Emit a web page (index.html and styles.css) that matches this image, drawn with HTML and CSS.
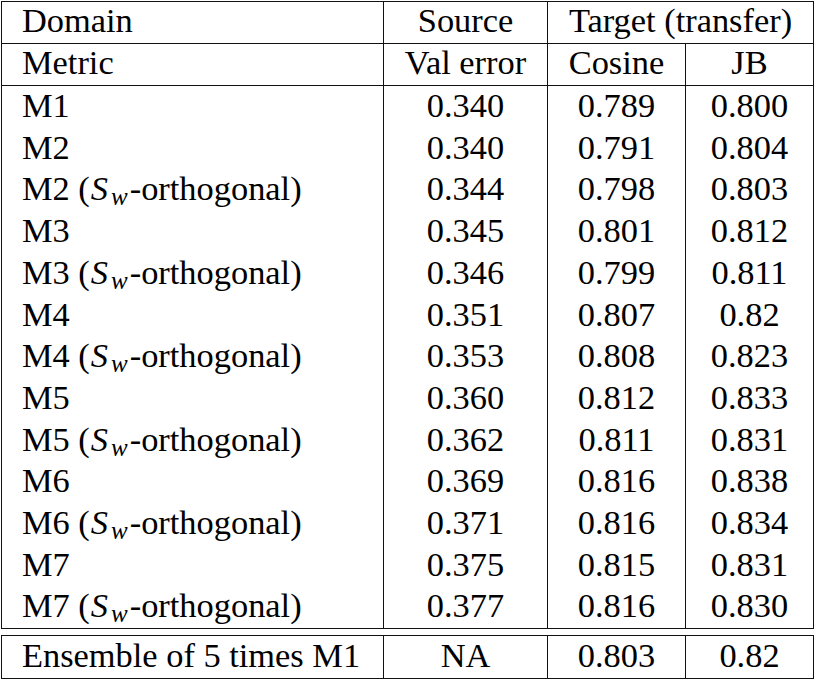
FILE: index.html
```html
<!DOCTYPE html>
<html>
<head>
<meta charset="utf-8">
<link rel="stylesheet" href="styles.css">
</head>
<body>
<div class="page">
  <table class="tbl main">
    <colgroup><col class="c1"><col class="c2"><col class="c3"><col class="c4"></colgroup>
    <thead>
      <tr class="hrow"><td class="l">Domain</td><td>Source</td><td colspan="2">Target (transfer)</td></tr>
      <tr class="hrow"><td class="l">Metric</td><td>Val error</td><td>Cosine</td><td>JB</td></tr>
    </thead>
    <tbody>
      <tr><td class="l">M1</td><td>0.340</td><td>0.789</td><td>0.800</td></tr>
      <tr><td class="l">M2</td><td>0.340</td><td>0.791</td><td>0.804</td></tr>
      <tr><td class="l">M2 (<i>S</i><sub>w</sub>-orthogonal)</td><td>0.344</td><td>0.798</td><td>0.803</td></tr>
      <tr><td class="l">M3</td><td>0.345</td><td>0.801</td><td>0.812</td></tr>
      <tr><td class="l">M3 (<i>S</i><sub>w</sub>-orthogonal)</td><td>0.346</td><td>0.799</td><td>0.811</td></tr>
      <tr><td class="l">M4</td><td>0.351</td><td>0.807</td><td>0.82</td></tr>
      <tr><td class="l">M4 (<i>S</i><sub>w</sub>-orthogonal)</td><td>0.353</td><td>0.808</td><td>0.823</td></tr>
      <tr><td class="l">M5</td><td>0.360</td><td>0.812</td><td>0.833</td></tr>
      <tr><td class="l">M5 (<i>S</i><sub>w</sub>-orthogonal)</td><td>0.362</td><td>0.811</td><td>0.831</td></tr>
      <tr><td class="l">M6</td><td>0.369</td><td>0.816</td><td>0.838</td></tr>
      <tr><td class="l">M6 (<i>S</i><sub>w</sub>-orthogonal)</td><td>0.371</td><td>0.816</td><td>0.834</td></tr>
      <tr><td class="l">M7</td><td>0.375</td><td>0.815</td><td>0.831</td></tr>
      <tr><td class="l">M7 (<i>S</i><sub>w</sub>-orthogonal)</td><td>0.377</td><td>0.816</td><td>0.830</td></tr>
    </tbody>
  </table>
  <table class="tbl foot">
    <colgroup><col class="c1"><col class="c2"><col class="c3"><col class="c4"></colgroup>
    <tbody>
      <tr class="frow"><td class="l">Ensemble of 5 times M1</td><td>NA</td><td>0.803</td><td>0.82</td></tr>
    </tbody>
  </table>
</div>
</body>
</html>
```

FILE: styles.css
```css
html, body {
  margin: 0;
  background: #ffffff;
  font-family: "Liberation Serif", "Times New Roman", serif;
}

.page {
  display: flex;
  flex-direction: column;
  gap: 6px;
  padding: 1px 0 0 1px;
  width: 812px;
}

.tbl {
  border-collapse: collapse;
  table-layout: fixed;
  width: 812px;
  border: 1px solid #111;
  font-family: "Liberation Serif", "Times New Roman", serif;
  font-size: 34.4px;
  color: #000;
}

.c1 { width: 382px; }
.c2 { width: 164px; }
.c3 { width: 138px; }
.c4 { width: 128px; }

.tbl td {
  border-left: 1px solid #111;
  border-right: 1px solid #111;
  padding: 0 0 2px 0;
  text-align: center;
  white-space: nowrap;
  line-height: 39.7px;
}

.tbl td.l {
  text-align: left;
  padding-left: 20px;
}

.hrow td {
  border-bottom: 1px solid #111;
  line-height: 37px;
  padding-bottom: 4px;
}

.frow td {
  line-height: 39px;
  padding-bottom: 3px;
}

.tbl i {
  font-style: italic;
  padding-left: 1px;
  padding-right: 3px;
}

.tbl sub {
  font-style: italic;
  font-size: 25px;
  line-height: 0;
  vertical-align: -5px;
  padding-right: 2px;
}
```
